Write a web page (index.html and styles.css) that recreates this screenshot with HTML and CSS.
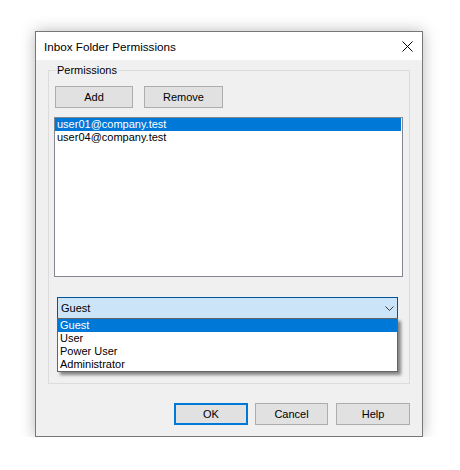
FILE: index.html
```html
<!DOCTYPE html>
<html>
<head>
<meta charset="utf-8">
<link rel="stylesheet" href="styles.css">
</head>
<body>
<div class="window">
  <div class="titlebar">
    <span class="title">Inbox Folder Permissions</span>
    <svg class="close" width="11" height="11" viewBox="0 0 11 11"><path d="M0.5 0.5 L10.5 10.5 M10.5 0.5 L0.5 10.5" stroke="#000" stroke-width="1" fill="none"/></svg>
  </div>
  <div class="client">
    <div class="group">
      <span class="legend">Permissions</span>
      <div class="toolbar">
        <button class="btn btn-add">Add</button>
        <button class="btn btn-remove">Remove</button>
      </div>
      <div class="listbox">
        <div class="item selected">user01@company.test</div>
        <div class="item">user04@company.test</div>
      </div>
      <div class="combo-wrap">
        <div class="combo">
          <span>Guest</span>
          <svg class="chevron" width="9" height="5" viewBox="0 0 9 5"><path d="M0.5 0.5 L4.5 4.5 L8.5 0.5" stroke="#3c3c3c" stroke-width="1" fill="none"/></svg>
        </div>
        <div class="dropdown">
          <div class="opt selected">Guest</div>
          <div class="opt">User</div>
          <div class="opt">Power User</div>
          <div class="opt">Administrator</div>
        </div>
      </div>
    </div>
    <div class="actions">
      <button class="btn btn-ok">OK</button>
      <button class="btn btn-cancel">Cancel</button>
      <button class="btn btn-help">Help</button>
    </div>
  </div>
</div>
</body>
</html>
```

FILE: styles.css
```css
html, body {
  margin: 0;
  background: #ffffff;
}
body {
  padding: 31px 0 0 35px;
  font-family: "Liberation Sans", Arial, sans-serif;
  font-size: 11px;
  color: #000;
}
.window {
  width: 388px;
  height: 406px;
  box-sizing: border-box;
  border: 1px solid #777777;
  background: #f0f0f0;
  box-shadow: 0 0 14px rgba(0,0,0,0.28);
  display: flex;
  flex-direction: column;
}
.titlebar {
  height: 28px;
  background: #ffffff;
  display: flex;
  align-items: center;
  justify-content: space-between;
  padding: 0 9px 0 8px;
}
.title {
  font-size: 11.7px;
  padding-top: 1px;
}
.close {
  display: block;
  margin-top: 1px;
}
.client {
  flex: 1;
  padding: 10px 12px 11px 12px;
  display: flex;
  flex-direction: column;
}
.group {
  position: relative;
  height: 314px;
  box-sizing: border-box;
  border: 1px solid #dcdcdc;
  padding: 15px 0 0 5px;
}
.legend {
  position: absolute;
  top: -7px;
  left: 7px;
  padding: 0 1px;
  background: #f0f0f0;
  line-height: 13px;
}
.toolbar {
  display: flex;
  gap: 11px;
  margin-left: 1px;
}
.btn {
  font-family: "Liberation Sans", Arial, sans-serif;
  font-size: 11px;
  color: #000;
  background: #e1e1e1;
  border: 1px solid #adadad;
  height: 22px;
  padding: 0;
  box-sizing: border-box;
}
.btn-add { width: 78px; }
.btn-remove { width: 79px; }
.listbox {
  margin-top: 9px;
  width: 349px;
  height: 160px;
  box-sizing: border-box;
  border: 1px solid #828790;
  background: #ffffff;
  padding-right: 1px;
}
.item {
  height: 13px;
  line-height: 13px;
  padding-left: 2px;
  white-space: nowrap;
}
.item.selected, .opt.selected {
  background: #0078d7;
  color: #ffffff;
}
.combo-wrap {
  position: relative;
  margin: 20px 0 0 3px;
  width: 341px;
}
.combo {
  height: 22px;
  box-sizing: border-box;
  border: 1px solid #005499;
  background: #cce4f7;
  display: flex;
  align-items: center;
  justify-content: space-between;
  padding: 0 3px 0 3px;
}
.chevron {
  display: block;
  margin-right: 0px;
}
.dropdown {
  position: absolute;
  top: 21px;
  left: 0;
  width: 341px;
  box-sizing: border-box;
  border: 1px solid #646464;
  background: #ffffff;
  box-shadow: 3px 3px 3px rgba(0,0,0,0.45);
}
.opt {
  height: 13px;
  line-height: 13px;
  padding-left: 2px;
}
.actions {
  margin-top: 19px;
  display: flex;
  justify-content: flex-end;
}
.btn-ok {
  width: 74px;
  border: 2px solid #0078d7;
}
.btn-cancel {
  width: 73px;
  margin-left: 7px;
}
.btn-help {
  width: 74px;
  margin-left: 8px;
}
```
